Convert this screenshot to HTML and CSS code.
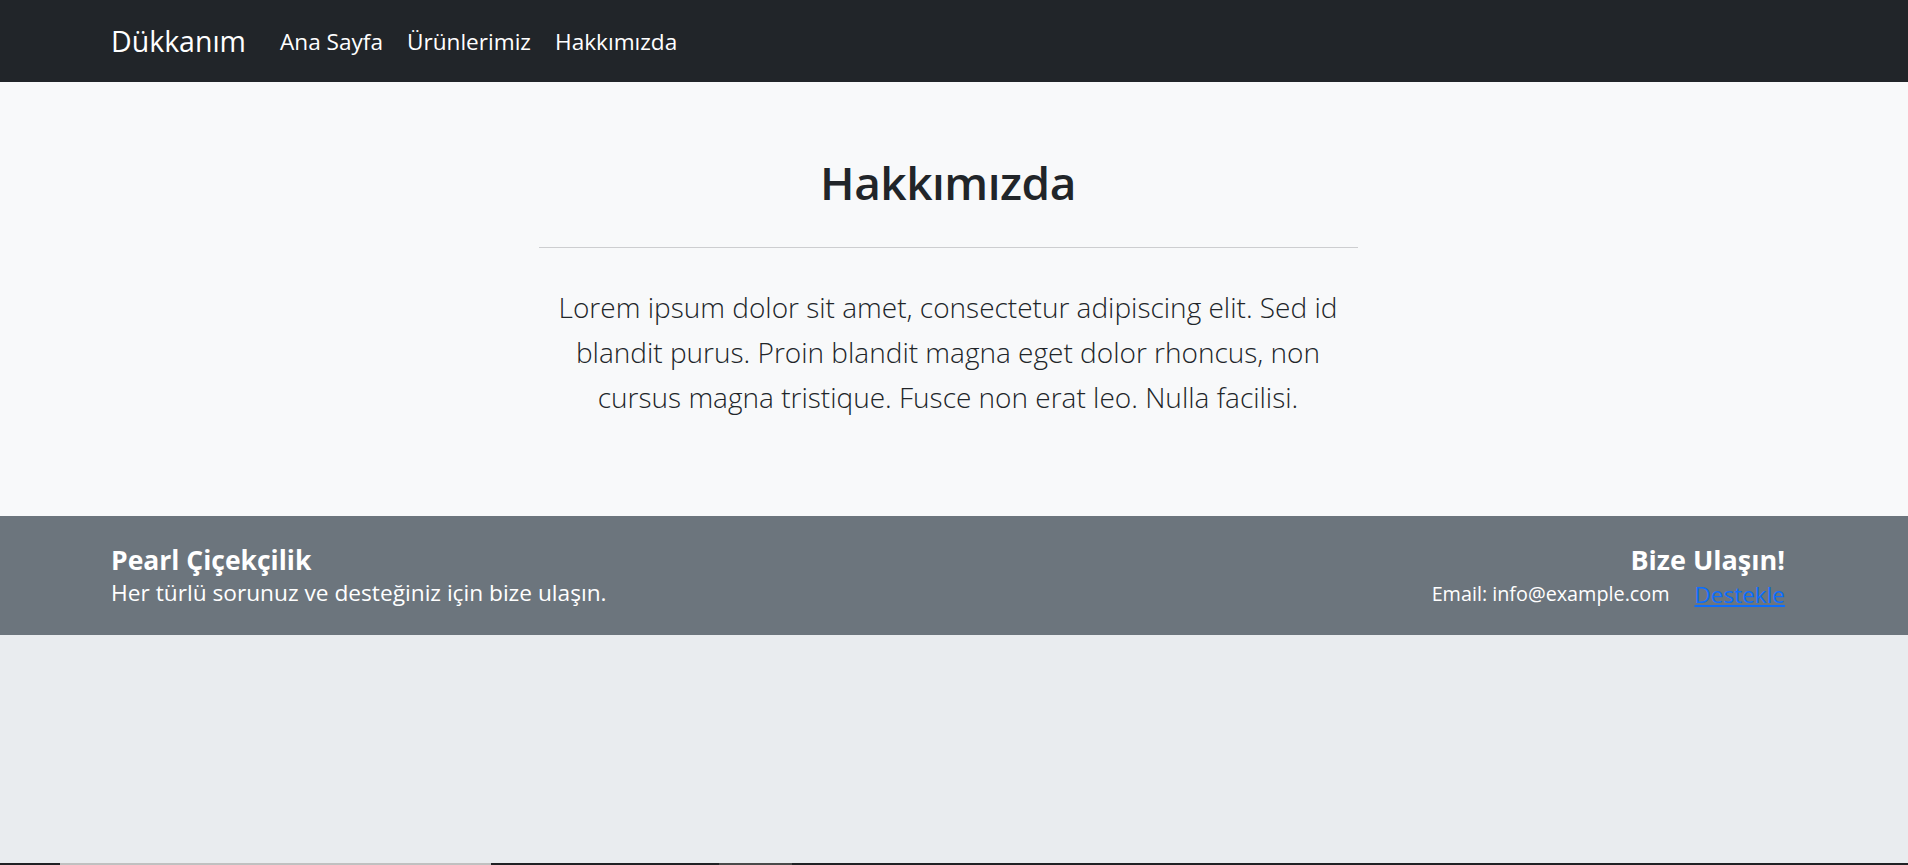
FILE: index.html
```html
<!DOCTYPE html>
<html lang="tr">
<head>
<meta charset="utf-8">
<title>Dükkanım - Hakkımızda</title>
<link rel="stylesheet" href="styles.css">
</head>
<body>
<div class="page">
  <nav class="navbar">
    <div class="container nav-inner">
      <a class="brand" href="#">Dükkanım</a>
      <ul class="nav-links">
        <li><a href="#">Ana Sayfa</a></li>
        <li><a href="#">Ürünlerimiz</a></li>
        <li><a href="#">Hakkımızda</a></li>
      </ul>
    </div>
  </nav>

  <main class="about">
    <div class="container">
      <div class="about-col">
        <h1 class="about-title">Hakkımızda</h1>
        <hr class="divider">
        <p class="lead">Lorem ipsum dolor sit amet, consectetur adipiscing elit. Sed id blandit purus. Proin blandit magna eget dolor rhoncus, non cursus magna tristique. Fusce non erat leo. Nulla facilisi.</p>
      </div>
    </div>
  </main>

  <footer class="footer">
    <div class="container footer-inner">
      <div class="footer-left">
        <h5 class="footer-title">Pearl Çiçekçilik</h5>
        <p class="footer-text">Her türlü sorunuz ve desteğiniz için bize ulaşın.</p>
      </div>
      <div class="footer-right">
        <h5 class="footer-title">Bize Ulaşın!</h5>
        <p class="footer-contact"><span class="email">Email: info@example.com</span><a class="support" href="#">Destekle</a></p>
      </div>
    </div>
  </footer>

  <div class="filler"></div>
  <div class="taskbar">
    <span class="tb-gap1"></span><span class="tb-light"></span><span class="tb-gap2"></span><span class="tb-mid"></span><span class="tb-rest"></span>
  </div>
</div>
</body>
</html>
```

FILE: styles.css
```css
* { box-sizing: border-box; }

html, body {
  margin: 0;
  padding: 0;
}

body {
  background: #e9ecef;
  font-family: "Open Sans", "Noto Sans", "Liberation Sans", sans-serif;
  color: #212529;
}

.page {
  min-height: 865px;
  display: flex;
  flex-direction: column;
}

.container {
  width: 1674px;
  margin: 0 auto;
}

/* Navbar */
.navbar {
  background: #212529;
  height: 82px;
  padding-right: 12px;
  display: flex;
  align-items: center;
}

.nav-inner {
  display: flex;
  align-items: center;
}

.brand {
  color: #fff;
  text-decoration: none;
  font-size: 28.5px;
  margin-right: 22px;
}

.nav-links {
  list-style: none;
  margin: 0;
  padding: 0;
  display: flex;
}

.nav-links a {
  display: block;
  color: #fff;
  text-decoration: none;
  font-size: 22.6px;
  padding: 8px 12px;
}

/* About section */
.about {
  background: #f8f9fa;
  padding: 70px 12px 0 0;
  height: 434px;
}

.about-col {
  width: 819px;
  margin: 0 auto;
  text-align: center;
}

.about-title {
  margin: 0;
  font-size: 46px;
  font-weight: 600;
  line-height: 60px;
  letter-spacing: -0.5px;
}

.divider {
  margin: 35px 0 0;
  border: 0;
  border-top: 1px solid #cdced0;
}

.lead {
  margin: 37px 0 0;
  font-size: 28px;
  font-weight: 300;
  line-height: 45px;
  color: #212529;
}

/* Footer */
.footer {
  background: #6c757d;
  color: #fff;
  height: 119px;
  padding-right: 12px;
}

.footer-inner {
  display: flex;
  justify-content: space-between;
  padding-top: 27px;
}

.footer-title {
  margin: 0;
  font-size: 27px;
  font-weight: 700;
  line-height: 34px;
}

.footer-left .footer-title {
  font-size: 26.5px;
}

.footer-text {
  margin: 0;
  font-size: 22.7px;
  line-height: 32px;
}

.footer-right {
  text-align: right;
}

.footer-contact {
  margin: 0;
  font-size: 19.8px;
  line-height: 32px;
}

.support {
  color: #0d6efd;
  margin-left: 25px;
  font-size: 22.5px;
  text-decoration: underline;
  position: relative;
  top: 2px;
}

.filler {
  flex: 1;
}

.taskbar {
  height: 2px;
  display: flex;
  background: #202124;
}

.tb-gap1 { width: 60px; }
.tb-light { width: 431px; background: #c0c0c0; }
.tb-gap2 { width: 228px; }
.tb-mid { width: 73px; background: #4a4a4a; }
.tb-rest { flex: 1; }
```
